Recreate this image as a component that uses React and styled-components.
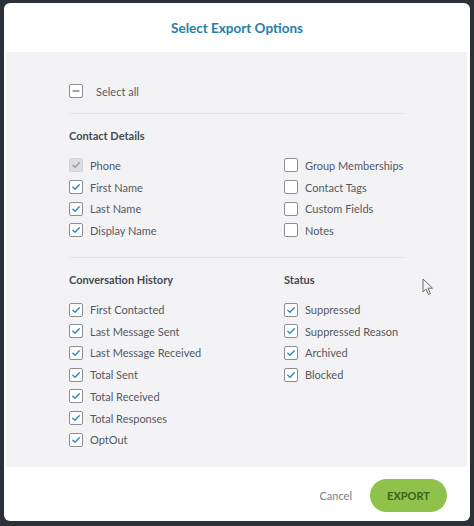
import React from "react";
import styled, { createGlobalStyle } from "styled-components";

const Global = createGlobalStyle`
  html, body { margin: 0; padding: 0; background: #2c3038; }
  body { font-family: Lato, "Open Sans", sans-serif; }
`;

const Page = styled.div`
  box-sizing: border-box;
  width: 474px;
  height: 526px;
  padding: 3px 4px 5px 4px;
  background: #2c3038;
`;

const Modal = styled.div`
  height: 100%;
  background: #fff;
  border-radius: 6px;
  display: flex;
  flex-direction: column;
  overflow: hidden;
`;

const Header = styled.div`
  height: 49px;
  flex: none;
  display: flex;
  align-items: center;
  justify-content: center;
`;

const Title = styled.h1`
  margin: 0;
  font-size: 13.5px;
  font-weight: 700;
  color: #2180a8;
  letter-spacing: 0;
`;

const Body = styled.div`
  position: relative;
  flex: 1;
  margin: 0 3px 0 2px;
  background: #f3f3f5;
  overflow: hidden;
  padding: 32px 62px 0 63px;
`;

const Row = styled.div`
  display: flex;
  align-items: center;
  height: ${(p) => p.$h || 21.7}px;
`;

const Label = styled.span`
  margin-left: ${(p) => p.$gap || 7}px;
  font-size: 11px;
  color: #55595f;
  white-space: nowrap;
`;

const Divider = styled.div`
  height: 1px;
  background: #e4e5e9;
  margin: ${(p) => p.$m};
`;

const Columns = styled.div`
  display: grid;
  grid-template-columns: 215px 1fr;
`;

const Column = styled.div`
  display: flex;
  flex-direction: column;
`;

const SectionTitle = styled.div`
  font-size: 11px;
  font-weight: 700;
  color: #454a50;
  line-height: 16px;
  margin-bottom: 10.5px;
`;

const Box = styled.span`
  box-sizing: border-box;
  width: 14px;
  height: 14px;
  flex: none;
  border-radius: 2px;
  border: 1.3px solid ${(p) => (p.$disabled ? "#d3d4d8" : "#8a8e96")};
  background: ${(p) => (p.$disabled ? "#dcdde1" : "#fff")};
  display: flex;
  align-items: center;
  justify-content: center;
`;

const Footer = styled.div`
  height: 54px;
  flex: none;
  display: flex;
  align-items: center;
  justify-content: flex-end;
  padding-right: 23px;
  gap: 18px;
`;

const CancelButton = styled.button`
  border: none;
  background: none;
  padding: 0;
  font-family: inherit;
  font-size: 11px;
  color: #7a7e85;
  margin-top: 2px;
`;

const ExportButton = styled.button`
  border: none;
  width: 77px;
  height: 33px;
  border-radius: 17px;
  background: #8ec24a;
  font-family: inherit;
  font-size: 11px;
  font-weight: 700;
  color: #3f5f1c;
  margin-top: 2px;
`;

const Cursor = styled.svg`
  position: absolute;
  left: 416px;
  top: 226px;
`;

function Checkbox({ state = "checked", disabled }) {
  return (
    <Box $disabled={disabled}>
      {state === "checked" && (
        <svg width="10" height="10" viewBox="0 0 10 10">
          <path
            d="M1.8 5.2 L4 7.3 L8.3 2.8"
            fill="none"
            stroke={disabled ? "#9a9ca2" : "#2a8cbc"}
            strokeWidth="1.4"
            strokeLinecap="round"
            strokeLinejoin="round"
          />
        </svg>
      )}
      {state === "partial" && (
        <svg width="10" height="10" viewBox="0 0 10 10">
          <path d="M2 5 H8" stroke="#80848c" strokeWidth="1.3" strokeLinecap="round" />
        </svg>
      )}
    </Box>
  );
}

function Option({ label, state, disabled }) {
  return (
    <Row>
      <Checkbox state={state} disabled={disabled} />
      <Label>{label}</Label>
    </Row>
  );
}

const contactLeft = [
  { label: "Phone", state: "checked", disabled: true },
  { label: "First Name", state: "checked" },
  { label: "Last Name", state: "checked" },
  { label: "Display Name", state: "checked" },
];
const contactRight = ["Group Memberships", "Contact Tags", "Custom Fields", "Notes"];
const history = [
  "First Contacted",
  "Last Message Sent",
  "Last Message Received",
  "Total Sent",
  "Total Received",
  "Total Responses",
  "OptOut",
];
const status = ["Suppressed", "Suppressed Reason", "Archived", "Blocked"];

export default function App() {
  return (
    <>
      <Global />
      <Page>
        <Modal>
          <Header>
            <Title>Select Export Options</Title>
          </Header>
          <Body>
            <Row $h={14}>
              <Checkbox state="partial" />
              <Label $gap={13}>Select all</Label>
            </Row>
            <Divider $m="15px 0 14px 0" />
            <Columns>
              <Column>
                <SectionTitle>Contact Details</SectionTitle>
                {contactLeft.map((o) => (
                  <Option key={o.label} {...o} />
                ))}
              </Column>
              <Column>
                <SectionTitle>&nbsp;</SectionTitle>
                {contactRight.map((l) => (
                  <Option key={l} label={l} state="none" />
                ))}
              </Column>
            </Columns>
            <Divider $m="16px 0 14px 0" />
            <Columns>
              <Column>
                <SectionTitle>Conversation History</SectionTitle>
                {history.map((l) => (
                  <Option key={l} label={l} state="checked" />
                ))}
              </Column>
              <Column>
                <SectionTitle>Status</SectionTitle>
                {status.map((l) => (
                  <Option key={l} label={l} state="checked" />
                ))}
              </Column>
            </Columns>
            <Divider $m="17px 0 0 0" />
            <Cursor width="12" height="18" viewBox="0 0 12 18">
              <path
                d="M1 1 L1 14 L4 11 L6.5 16.5 L8.5 15.6 L6 10.2 L10.5 10.2 Z"
                fill="#f3f3f5"
                stroke="#6a6d74"
                strokeWidth="1"
                strokeLinejoin="round"
              />
            </Cursor>
          </Body>
          <Footer>
            <CancelButton>Cancel</CancelButton>
            <ExportButton>EXPORT</ExportButton>
          </Footer>
        </Modal>
      </Page>
    </>
  );
}
